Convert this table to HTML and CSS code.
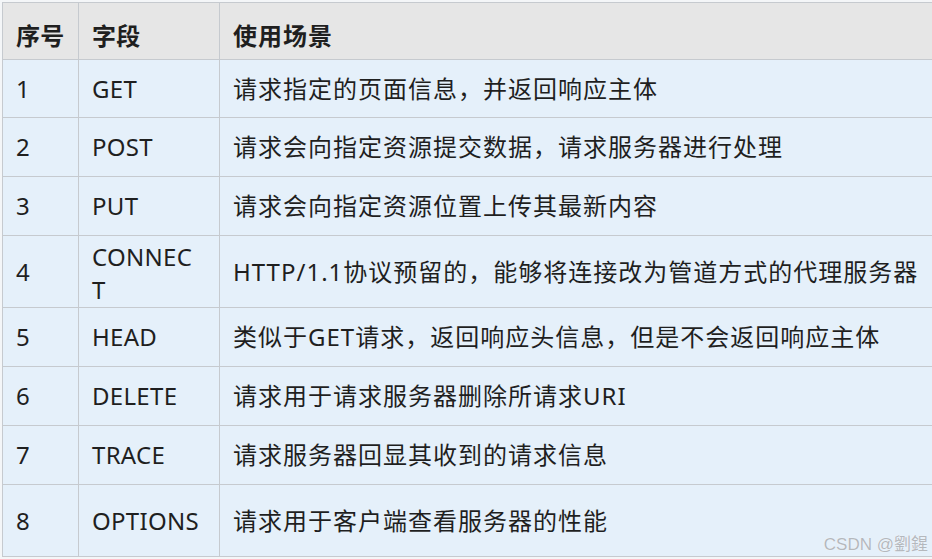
FILE: index.html
```html
<!DOCTYPE html>
<html lang="zh-CN">
<head>
<meta charset="utf-8">
<title>HTTP 请求方法</title>
<link rel="stylesheet" href="styles.css">
</head>
<body>
<div class="frame">
  <table class="methods">
    <colgroup>
      <col class="c-num">
      <col class="c-field">
      <col class="c-desc">
    </colgroup>
    <thead>
      <tr class="head"><th>序号</th><th>字段</th><th>使用场景</th></tr>
    </thead>
    <tbody>
      <tr class="r first"><td>1</td><td>GET</td><td>请求指定的页面信息，并返回响应主体</td></tr>
      <tr class="r"><td>2</td><td>POST</td><td>请求会向指定资源提交数据，请求服务器进行处理</td></tr>
      <tr class="r"><td>3</td><td>PUT</td><td>请求会向指定资源位置上传其最新内容</td></tr>
      <tr class="r tall"><td>4</td><td class="wrap">CONNEC<br>T</td><td>HTTP/1.1协议预留的，能够将连接改为管道方式的代理服务器</td></tr>
      <tr class="r"><td>5</td><td>HEAD</td><td>类似于GET请求，返回响应头信息，但是不会返回响应主体</td></tr>
      <tr class="r"><td>6</td><td>DELETE</td><td>请求用于请求服务器删除所请求URI</td></tr>
      <tr class="r"><td>7</td><td>TRACE</td><td>请求服务器回显其收到的请求信息</td></tr>
      <tr class="r tall"><td>8</td><td>OPTIONS</td><td>请求用于客户端查看服务器的性能</td></tr>
    </tbody>
  </table>
  <div class="mark">CSDN @劉鍟</div>
</div>
</body>
</html>
```
FILE: styles.css
```css
html, body {
  margin: 0;
  padding: 0;
  background: #f4f6f8;
}
body {
  width: 932px;
  height: 559px;
  overflow: hidden;
  font-family: "Noto Sans", "Noto Sans CJK SC", sans-serif;
  color: #1f1f1f;
}
.frame {
  position: relative;
  padding: 2px 0 0 2px;
}
.methods {
  border-collapse: collapse;
  table-layout: fixed;
  width: 960px;
  font-size: 24px;
  letter-spacing: 0.3px;
}
.c-num { width: 76px; }
.c-field { width: 141px; }
.c-desc { width: 743px; }
.methods th,
.methods td {
  border: 1px solid #c6cacf;
  padding: 0 6px 0 13px;
  text-align: left;
  vertical-align: middle;
  line-height: 30px;
  font-weight: 400;
}
.methods td:nth-child(3),
.methods th:nth-child(3) {
  letter-spacing: 1px;
}
.head th {
  background: #e6e6e6;
  height: 57px;
  font-weight: 700;
  padding-top: 8px;
  padding-bottom: 0;
  box-sizing: border-box;
  font-family: "Noto Sans CJK SC", sans-serif;
}
.r td {
  background: #e5f0fa;
  height: 59px;
  box-sizing: border-box;
}
.r.first td {
  height: 58px;
}
.r.tall td {
  height: 72px;
}
.methods td.wrap {
  line-height: 33px;
  padding-top: 2px;
}
.mark {
  position: absolute;
  right: 4px;
  top: 530px;
  font-family: "Liberation Sans", "Noto Sans CJK TC", sans-serif;
  font-size: 17px;
  color: #b4b8bd;
  text-shadow: 0 0 1px #ffffff;
  letter-spacing: 0;
}
```
